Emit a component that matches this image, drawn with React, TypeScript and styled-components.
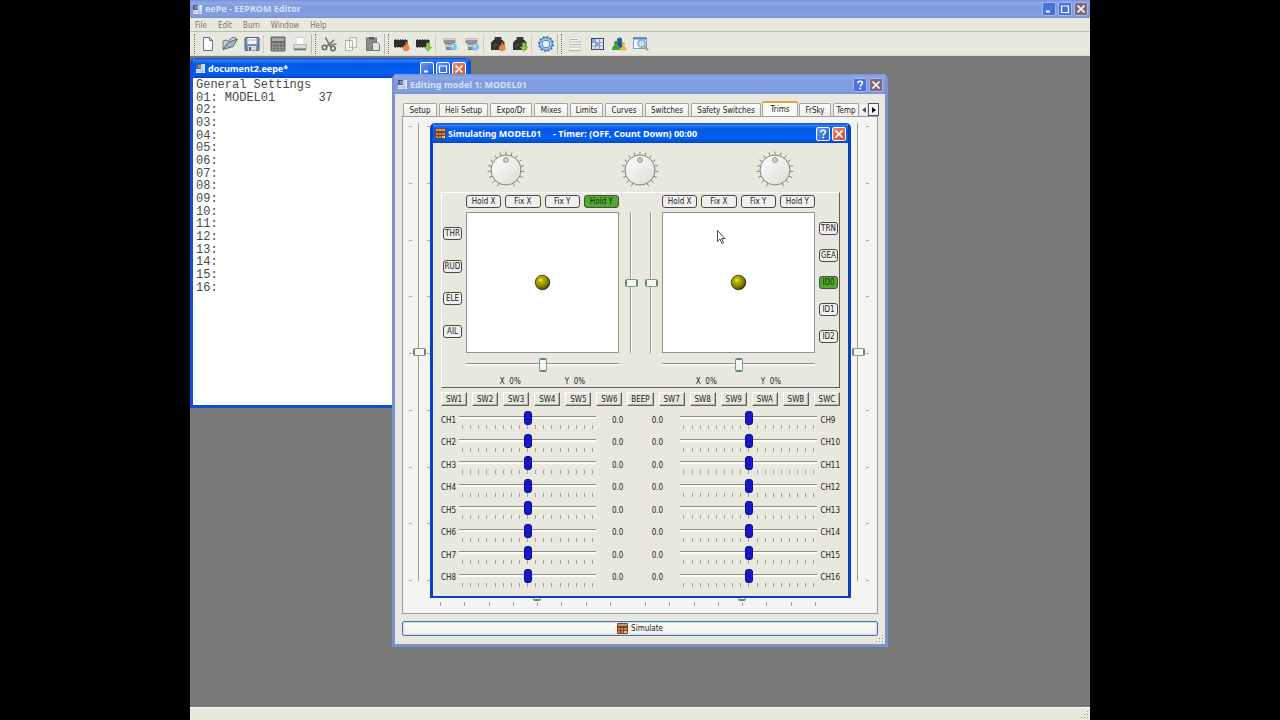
import React from 'react';
import styled, { createGlobalStyle, css } from 'styled-components';

const uiFont = '"DejaVu Sans Condensed", "DejaVu Sans", "Liberation Sans", sans-serif';
const titleFont = '"Noto Sans", "Open Sans", "Liberation Sans", sans-serif';
const face = '#e9e8df';

const GlobalStyle = createGlobalStyle`
  * { box-sizing: border-box; }
  body { margin: 0; background: #000; font-family: ${uiFont}; font-size: 8px; color: #222; }
  button, input { font: inherit; color: inherit; margin: 0; padding: 0; }
  svg { display: block; }
`;

/* ---------- main window ---------- */

const MainWindow = styled.main`
  display: flex;
  flex-direction: column;
  max-width: 900px;
  min-height: 100vh;
  margin: 0 auto;
  background: ${face};
`;

const TitleBar = styled.header<{ $active?: boolean; $tall?: boolean }>`
  display: flex;
  align-items: center;
  gap: 2px;
  flex: none;
  height: ${p => (p.$tall ? 20 : 18)}px;
  padding: ${p => (p.$tall ? 1 : 0)}px 2px 0;
  color: ${p => (p.$active ? '#fff' : '#d5e0fa')};
  font: bold 9px/18px ${titleFont};
  background: ${p =>
    p.$active
      ? 'linear-gradient(#0a4fd8, #2b7df8 12%, #0058e6 30%, #0560f4 75%, #0148cc)'
      : 'linear-gradient(#7a92dc, #8ca8e6 15%, #7e9bdc 40%, #839fe0 85%, #7790d6)'};
`;

const TitleIcon = styled.span`
  width: 11px;
  flex: none;
`;

const TitleText = styled.h1`
  flex: 1;
  margin: 0;
  font: inherit;
  white-space: pre;
  overflow: hidden;
`;

const CaptionButton = styled.button<{ $kind: 'blue' | 'red'; $dim?: boolean }>`
  display: grid;
  place-items: center;
  width: 14px;
  height: 14px;
  flex: none;
  border: 1px solid ${p => (p.$dim ? '#a3b5ee' : '#fff')};
  border-radius: 2px;
  color: #fff;
  background: ${p =>
    p.$kind === 'red'
      ? p.$dim ? '#80687a' : 'linear-gradient(135deg, #ea8f70, #d2492a)'
      : p.$dim ? '#4c70dc' : 'linear-gradient(135deg, #6a98f2, #1f57d8)'};
`;

const MenuBar = styled.nav`
  display: flex;
  flex: none;
  gap: 11px;
  height: 14px;
  padding: 0 5px;
  border-bottom: 1px solid #bdbbb2;
`;

const MenuItem = styled.button`
  border: 0;
  background: none;
  line-height: 15px;
  color: #77766f;
`;

const ToolBar = styled.div`
  display: flex;
  align-items: center;
  flex: none;
  height: 24px;
  border-bottom: 1px solid #d9d7ce;
`;

const Grip = styled.span<{ $line?: boolean }>`
  width: 7px;
  height: 20px;
  padding-left: 3px;
  border-left: 1px solid ${p => (p.$line ? '#b9b7af' : 'transparent')};
  &::before {
    content: '';
    display: block;
    height: 20px;
    border-left: 1px dotted #77756d;
  }
`;

const Separator = styled.span`
  width: 4px;
  height: 18px;
  border-left: 1px solid #cfcdc3;
`;

const ToolButton = styled.button`
  display: grid;
  place-items: center;
  width: 22px;
  height: 22px;
  border: 0;
  background: none;
`;

const Workspace = styled.section`
  position: relative;
  flex: 1;
  overflow: hidden;
  background: #787878;
`;

const StatusBar = styled.footer`
  display: flex;
  justify-content: flex-end;
  align-items: flex-end;
  flex: none;
  height: 13px;
  padding: 1px;
  border-top: 1px solid #fff;
`;

/* ---------- child windows ---------- */

const DocumentWindow = styled.section`
  position: absolute;
  left: 0;
  top: 2px;
  width: 281px;
  height: 350px;
  display: flex;
  flex-direction: column;
  border: 3px solid #0b4fd8;
  border-top: 0;
  border-radius: 5px 5px 0 0;
  overflow: hidden;
  background: #fff;
`;

const ModelList = styled.ul`
  list-style: none;
  margin: 0;
  padding: 1px 3px;
  font: 12px/13px "Liberation Mono", monospace;
  color: #4a4a4a;
  white-space: pre;
`;

const ModelRow = styled.li`
  height: 13px;
  &:nth-child(3n + 2) { height: 12px; }
`;

const EditWindow = styled.section`
  position: absolute;
  left: 202px;
  top: 18px;
  width: 496px;
  height: 573px;
  display: flex;
  flex-direction: column;
  border: 3px solid #7f8fd6;
  border-top-width: 0;
  border-radius: 5px 5px 0 0;
  overflow: hidden;
  background: ${face};
`;

const EditBody = styled.div`
  flex: 1;
  display: flex;
  flex-direction: column;
  padding: 7px 7px 8px;
`;

const TabStrip = styled.div`
  display: flex;
  align-items: flex-end;
  height: 15px;
  gap: 2px;
  padding-left: 1px;
`;

const Tab = styled.button<{ $w: number; $selected?: boolean }>`
  flex: none;
  width: ${p => p.$w}px;
  height: ${p => (p.$selected ? 15 : 13)}px;
  border: 1px solid #a4a4a0;
  border-bottom: 0;
  border-radius: 2px 2px 0 0;
  background: linear-gradient(#fdfdfb, #efede6);
  white-space: nowrap;
  ${p =>
    p.$selected &&
    css`
      margin: 0 -1px;
      border-top: 2px solid #e8a33c;
      background: #fafaf8;
    `}
`;

const TabScroller = styled.button<{ $focus?: boolean }>`
  display: grid;
  place-items: center;
  flex: none;
  width: ${p => (p.$focus ? 11 : 9)}px;
  height: 13px;
  margin-left: -2px;
  border: 1px solid ${p => (p.$focus ? '#3c5a80' : '#e4e2d8')};
  background: #f6f5f0;
`;

const TrimPane = styled.div`
  flex: 1;
  display: grid;
  grid-template-columns: 32px 1fr 1fr 32px;
  grid-template-rows: 1fr 25px;
  padding: 6px 0 3px;
  border: 1px solid #9b9d9c;
  background: #f4f4f2;
`;

const VerticalTrim = styled.div<{ $col: number }>`
  grid-column: ${p => p.$col};
  grid-row: 1;
  display: flex;
  gap: 1px;
  height: 458px;
  padding: 0 8px 0 6px;
  justify-content: ${p => (p.$col === 1 ? 'flex-start' : 'flex-end')};
`;

const VerticalTicks = styled.div`
  display: flex;
  flex-direction: column;
  justify-content: space-between;
  padding: 3px 0 0;
  i { width: 3px; height: 1px; background: #a9a9a6; }
`;

const BottomTrim = styled.div<{ $col: number }>`
  grid-column: ${p => p.$col};
  grid-row: 2;
  display: flex;
  flex-direction: column;
  gap: 1px;
  padding: 2px 26px 0 2px;
`;

const SimulateButton = styled.button`
  display: flex;
  align-items: center;
  justify-content: center;
  gap: 3px;
  height: 15px;
  margin-top: 7px;
  border: 1px solid #4f74a8;
  border-radius: 2px;
  box-shadow: inset 0 0 0 1px #cbdcf2;
  background: linear-gradient(#fcfcfa, #efeee8);
`;

const CornerGrip = styled.span`
  position: absolute;
  right: 1px;
  bottom: 1px;
`;

const SimWindow = styled.section`
  position: absolute;
  left: 240px;
  top: 67px;
  width: 421px;
  height: 475px;
  display: flex;
  flex-direction: column;
  border: 3px solid #0a41bd;
  border-width: 0 3px 2px;
  border-radius: 5px 5px 0 0;
  overflow: hidden;
  background: ${face};
`;

const SimBody = styled.div`
  padding: 0 8px;
`;

const DialRow = styled.div`
  display: grid;
  grid-template-columns: repeat(3, 1fr);
  justify-items: center;
  padding: 7px 0 2px;
  margin: 0 -2px;
`;

const StickFrame = styled.div`
  display: grid;
  grid-template-columns: 24px 1fr 21px 22px 1fr 24px;
  grid-template-rows: 13px 141px auto;
  row-gap: 4px;
  padding-top: 2px;
  height: 196px;
  border: 1px solid #fff;
  border-right-color: #5d5c57;
  border-bottom-color: #5d5c57;
`;

const ModeRow = styled.div<{ $col: number }>`
  grid-column: ${p => p.$col};
  grid-row: 1;
  display: grid;
  grid-template-columns: repeat(4, 1fr);
  gap: 4px;
`;

const Toggle = styled.button<{ $on?: boolean }>`
  height: 13px;
  border: 1px solid #4a4a4a;
  border-radius: 3px;
  line-height: 12px;
  text-align: center;
  white-space: nowrap;
  background: ${p => (p.$on ? '#4fab2c' : '#f0f0ee')};
`;

const SideSwitches = styled.div<{ $col: number; $pad: number }>`
  grid-column: ${p => p.$col};
  grid-row: 2;
  display: flex;
  flex-direction: column;
  align-items: ${p => (p.$col === 1 ? 'flex-start' : 'flex-end')};
  justify-content: space-between;
  padding: ${p => p.$pad}px 1px;
  ${Toggle} { width: 19px; }
`;

const StickPad = styled.div<{ $col: number }>`
  grid-column: ${p => p.$col};
  grid-row: 2;
  display: grid;
  place-items: center;
  border: 1px solid #8c969c;
  background: #fff;
`;

const TrimCell = styled.div<{ $col: number; $row: number }>`
  grid-column: ${p => p.$col};
  grid-row: ${p => p.$row};
  display: flex;
  flex-direction: column;
  align-items: ${p => (p.$col === 3 ? 'flex-end' : 'center')};
  padding: ${p => (p.$row === 3 ? '1px 0 0' : '0 2px')};
`;

const Readouts = styled.div`
  display: flex;
  justify-content: center;
  gap: 44px;
  width: 100%;
  padding: 5px 0 0;
  line-height: 10px;
  white-space: pre;
`;

const sliderThumb = css<{ $blue?: boolean; $vertical?: boolean }>`
  appearance: none;
  width: ${p => (p.$vertical ? 13 : 8)}px;
  height: ${p => (p.$vertical ? 8 : 14)}px;
  border-radius: ${p => (p.$blue ? 3 : 2)}px;
  ${p =>
    p.$blue
      ? css`
          border: 1px solid #0c0c96;
          background: #1717c4;
        `
      : css`
          border: 1px solid #84998a;
          ${p.$vertical ? 'border-left: 2px solid #5d9069; border-right: 2px solid #5d9069;' : 'border-top: 2px solid #5d9069; border-bottom: 2px solid #5d9069;'}
          background: #f6f6f4;
        `}
`;

const Slider = styled.input<{ $blue?: boolean; $vertical?: boolean }>`
  appearance: none;
  flex: none;
  display: block;
  ${p =>
    p.$vertical
      ? css`
          writing-mode: vertical-lr;
          width: 13px;
          height: 100%;
          background: linear-gradient(#9a9993, #9a9993) 5px 0 / 1px 100% no-repeat,
            linear-gradient(#fff, #fff) 6px 0 / 1px 100% no-repeat;
        `
      : css`
          width: 100%;
          height: 14px;
          background: linear-gradient(#8f8e88, #8f8e88) 0 5px / 100% 1px no-repeat,
            linear-gradient(#fbfbf8, #fbfbf8) 0 6px / 100% 2px no-repeat;
        `}
  &::-webkit-slider-thumb { ${sliderThumb} }
`;

const TickRow = styled.div`
  display: flex;
  justify-content: space-between;
  padding: 0 3px;
  i { width: 1px; height: 4px; background: #a3a29b; }
`;

const SwitchRow = styled.div`
  display: grid;
  grid-template-columns: repeat(13, 1fr);
  gap: 5px;
  margin: 4px 0 3px;
`;

const SwitchButton = styled.button`
  height: 14px;
  border: 1px solid #fff;
  border-right-color: #5f5e59;
  border-bottom-color: #5f5e59;
  box-shadow: inset -1px -1px #b9b7ad;
  background: ${face};
  line-height: 13px;
  text-align: center;
`;

const ChannelGrid = styled.div`
  display: grid;
  grid-template-columns: 1fr 1fr;
  grid-template-rows: repeat(8, 1fr);
  grid-auto-flow: column;
  height: 180px;
`;

const ChannelRow = styled.label<{ $right?: boolean }>`
  display: grid;
  align-items: center;
  grid-template-columns: ${p => (p.$right ? '41px 137px 1fr' : '18px 137px 1fr')};
`;

const ChannelName = styled.span<{ $right?: boolean }>`
  padding-left: ${p => (p.$right ? 3 : 0)}px;
`;

const ChannelSlider = styled.span`
  display: flex;
  flex-direction: column;
`;

const ChannelValue = styled.output<{ $right?: boolean }>`
  text-align: center;
  padding-right: ${p => (p.$right ? 5 : 0)}px;
`;

const Pointer = styled.span`
  position: absolute;
  left: 527px;
  top: 174px;
`;

/* ---------- drawings ---------- */

const AppIcon = () => (
  <svg width="11" height="11" viewBox="0 0 11 11">
    <rect x="1" y="1" width="9" height="9" fill="#dfe6f3" />
    <rect x="1" y="1" width="5" height="5" fill="#4c608c" />
    <rect x="3" y="2" width="3" height="3" fill="#7c94bd" />
    <path d="M1 8h9M7 1v9" stroke="#a9b5cf" strokeWidth="1" />
  </svg>
);

const SimIcon = () => (
  <svg width="11" height="11" viewBox="0 0 11 11">
    <rect width="11" height="11" rx="1" fill="#7a4526" />
    <rect x="1" y="1" width="9" height="2" fill="#b99a86" />
    <path d="M1 5h2v2H1zM4 5h2v2H4zM7 5h3v2H7zM1 8h2v2H1zM4 8h2v2H4z" fill="#cf8848" />
    <path d="M7 8h3v2H7z" fill="#f0c070" />
  </svg>
);

const Min = () => (
  <svg width="10" height="10" viewBox="0 0 10 10"><path d="M2 7.500h4" stroke="#fff" strokeWidth="2" /></svg>
);
const Max = () => (
  <svg width="10" height="10" viewBox="0 0 10 10"><path d="M1.500 2v6.500h7V2zM1 2h8" fill="none" stroke="#fff" strokeWidth="1.200" /></svg>
);
const Close = () => (
  <svg width="10" height="10" viewBox="0 0 10 10"><path d="M1.500 1.500l7 7M8.500 1.500l-7 7" stroke="#fff" strokeWidth="1.700" /></svg>
);
const Help = () => (
  <svg width="10" height="10" viewBox="0 0 10 10">
    <path d="M2.800 3.200C2.800.6 7.400.6 7.400 3c0 1.600-2.200 1.600-2.200 3.400" fill="none" stroke="#fff" strokeWidth="1.500" />
    <circle cx="5.200" cy="8.600" r="1" fill="#fff" />
  </svg>
);

const SizeGrip = () => (
  <svg width="9" height="9" viewBox="0 0 9 9">
    <path d="M7 1h1v1H7zM4 4h1v1H4zM7 4h1v1H7zM1 7h1v1H1zM4 7h1v1H4zM7 7h1v1H7z" fill="#96948a" />
  </svg>
);

const Ball = () => (
  <svg width="17" height="17" viewBox="0 0 17 17">
    <defs>
      <radialGradient id="ball" cx="38%" cy="34%" r="65%">
        <stop offset="0" stopColor="#f4f060" />
        <stop offset="0.25" stopColor="#b8b400" />
        <stop offset="0.75" stopColor="#7d7a00" />
        <stop offset="1" stopColor="#3e3d08" />
      </radialGradient>
    </defs>
    <circle cx="8.500" cy="8.500" r="7.300" fill="url(#ball)" stroke="#33330e" strokeWidth="0.800" />
  </svg>
);

const Dial = () => (
  <svg width="40" height="40" viewBox="0 0 40 40" role="img" aria-label="Potentiometer">
    <defs>
      <linearGradient id="dial" x1="0" y1="0" x2="1" y2="1">
        <stop offset="0" stopColor="#fff" />
        <stop offset="1" stopColor="#dddbd3" />
      </linearGradient>
    </defs>
    {Array.from({ length: 17 }, (_, i) => (
      <path key={i} d="M20 1.500v4" stroke="#77766f" strokeWidth="0.800" transform={`rotate(${-152 + i * 19} 20 20)`} />
    ))}
    <circle cx="20" cy="20" r="15" fill="url(#dial)" stroke="#84837d" strokeWidth="1" />
    <circle cx="20" cy="10" r="2.400" fill="#d5d4cd" stroke="#84837d" strokeWidth="0.900" />
  </svg>
);

const Flame = () => <path d="M12 6c.5 2 3.300 3.300 3.300 6.300A3.200 3.200 0 0 1 9 12.500c0-1.800 1-2.200 1.300-3.500l1 1.200C12 9 11.600 7.500 12 6z" fill="#f0823a" stroke="#e27230" strokeWidth=".5" />;
const DownArrow = () => <path d="M10.500 7h3v4h2.300L12 15.500 8.200 11h2.300z" fill="#84c84c" stroke="#6fb33e" strokeWidth=".6" />;
const Chip = () => (
  <>
    <path d="M1.500 3v9M4 3v9M6.500 3v9M9 3v9M11.500 3v9" stroke="#666" strokeWidth="1.200" />
    <rect x="0" y="4" width="13.500" height="7" fill="#2c2e2e" />
  </>
);
const Radio = () => (
  <>
    <path d="M5 4V1.500h6V4z" fill="#3a3d3c" stroke="#333" strokeWidth="1" />
    <path d="M1 6.500L3.500 4h9L14.500 6.500V14H1z" fill="#303433" />
    <path d="M3 8.500h4M3 10.500h3" stroke="#4d5553" />
  </>
);
const Stack = () => (
  <>
    <path d="M1.500 2.500h12v4h-12z" fill="#8d9093" />
    <path d="M2 3.500h11" stroke="#d3d5d7" strokeWidth="1.200" />
    <path d="M3 6.500h9v4H3z" fill="#aeb1b3" />
    <path d="M2 6.500c2 1.500 9 1.500 11 0M4.500 11h6v2.500h-6z" fill="#8d9093" stroke="#75787b" strokeWidth="1" />
    <path d="M3.500 9.500c2 1.200 6 1.200 8 0" fill="none" stroke="#e3e4e5" strokeWidth="1" />
    <circle cx="11.500" cy="11" r="3.400" fill="#7cc3ec" />
    <circle cx="10.600" cy="10" r="1.200" fill="#c9ebfb" />
  </>
);

const toolIcons: Record<string, React.ReactNode> = {
  New: <path d="M3.500 1.500h6l3 3v10h-9zM9.500 1.500v3h3" fill="#fbfcfe" stroke="#6a7585" />,
  Open: (
    <>
      <path d="M1 13V5l3-1 2 1 5-4 3 1-1 3" fill="#c8cdd2" stroke="#6f767c" />
      <path d="M1 13.500L6 6.500 15.500 3 11 10.500z" fill="#9fb1be" stroke="#5f6870" />
    </>
  ),
  Save: (
    <>
      <rect x="1" y="1.500" width="14" height="13" rx="1" fill="#7590b4" stroke="#4d5f7c" />
      <rect x="3.500" y="2" width="9" height="6" fill="#f4f6f8" />
      <path d="M4 4h8" stroke="#a9b2bf" />
      <rect x="4" y="10" width="8" height="4.500" fill="#d6dce2" />
      <rect x="5" y="11" width="2" height="3" fill="#4d5f7c" />
    </>
  ),
  Simulate: (
    <>
      <rect x=".5" y=".5" width="15" height="15" rx="1" fill="#6c6c6a" />
      <rect x="2" y="2" width="12" height="3" fill="#a9a9a6" />
      <path d="M2 8h12M2 11h12M2 13.500h12" stroke="#a6a6a3" strokeWidth="1.700" strokeDasharray="2.200 1" />
    </>
  ),
  Print: (
    <>
      <rect x="4" y="1.500" width="8" height="7" fill="#fff" stroke="#c9c9c4" strokeWidth=".8" />
      <path d="M1.500 8.500h13v4h-13z" fill="#dcdcd7" stroke="#b1b1ac" strokeWidth=".8" />
      <path d="M2 13.500h12" stroke="#6c6c68" strokeWidth="1.600" />
    </>
  ),
  Cut: (
    <>
      <path d="M4.500 1.500l5.500 10M13 4L5 11M15.500 8L6 9.500" stroke="#7d7d7a" strokeWidth="1.700" />
      <circle cx="3.500" cy="11.500" r="2.200" fill="none" stroke="#6b6b68" strokeWidth="1.600" />
      <circle cx="12" cy="12.500" r="2.200" fill="none" stroke="#6b6b68" strokeWidth="1.600" />
    </>
  ),
  Copy: <path d="M6.500 1.500h7v10h-7zM2.500 4.500h7v10h-7z" fill="#f6f6f3" stroke="#b1b1ad" />,
  Paste: (
    <>
      <rect x="1.500" y="2" width="10" height="12.500" fill="#8b8b88" stroke="#777774" />
      <rect x="4" y="1" width="5" height="2.500" fill="#5c5c5a" />
      <path d="M7.500 6.500h5l2 2v6h-7z" fill="#e4e4e1" stroke="#777" />
    </>
  ),
  'Burn to Tx': <><Chip /><Flame /></>,
  'Read from Tx': <><Chip /><DownArrow /></>,
  'Write backup': <Stack />,
  'Read backup': <Stack />,
  'Burn firmware': <><Radio /><Flame /></>,
  'Read firmware': <><Radio /><DownArrow /></>,
  Preferences: (
    <>
      <circle cx="8" cy="8" r="7" fill="none" stroke="#3577b0" strokeWidth="1.800" strokeDasharray="2.200 1.460" />
      <circle cx="8" cy="8" r="5" fill="none" stroke="#3f7fb8" strokeWidth="3.400" />
      <circle cx="8" cy="8" r="5" fill="none" stroke="#8cc6ee" strokeWidth="2" />
      <circle cx="8" cy="8" r="3" fill="#e9eeee" />
    </>
  ),
  Notes: (
    <>
      <path d="M2.500 1h9l2 2v12h-11z" fill="#f4f4f1" stroke="#d3d3cf" strokeWidth=".8" />
      <path d="M3 3.500h8M3 6h10M3 8.500h10M3 11h10M2 14.500h12" stroke="#b3b3b0" />
    </>
  ),
  Table: (
    <>
      <rect x="2.500" y="2.500" width="12" height="11" fill="#dfe6f3" stroke="#34456e" />
      <path d="M3 3h3.500v3.500H3zM7 7h3.500v3H7z" fill="#8fa6cf" />
      <path d="M6.500 3v10.500M10.500 3v10.500M3 6.500h11.500M3 10h11.500" stroke="#8b9fc6" />
    </>
  ),
  Contributors: (
    <>
      <circle cx="8.500" cy="4" r="2.600" fill="#2c5aa8" /><path d="M6 12V6h5.500v6z" fill="#2a5299" />
      <circle cx="5" cy="7" r="2" fill="#3f8d47" /><path d="M1 14c0-3 1.500-5.500 4-5.500S9.500 11 9.500 14z" fill="#3fa52c" />
      <circle cx="12.500" cy="8" r="1.800" fill="#f0b03a" /><path d="M9.500 14.500c0-6 6-6 6 0z" fill="#f0b03a" />
    </>
  ),
  Compare: (
    <>
      <rect x=".5" y="1.500" width="13" height="11" fill="#f3f7fb" stroke="#7d9cc4" />
      <path d="M.5 2.500h13" stroke="#5c86c0" strokeWidth="2" />
      <circle cx="8.500" cy="7.500" r="3.600" fill="#bfe6f5" stroke="#6c9bb5" strokeWidth="1.200" />
      <path d="M11.300 10.300l3.700 4" stroke="#b99a5c" strokeWidth="2" />
    </>
  ),
};

const toolbar = [
  'grip', 'New', 'Open', 'Save', 'sep', 'Simulate', 'Print',
  'grip', 'Cut', 'Copy', 'Paste',
  'grip', 'Burn to Tx', 'Read from Tx', 'sep', 'Write backup', 'Read backup', 'sep', 'Burn firmware', 'Read firmware', 'sep', 'Preferences',
  'grip', 'Notes', 'Table', 'Contributors', 'Compare',
];

const tabs: [string, number][] = [
  ['Setup', 34], ['Heli Setup', 49], ['Expo/Dr', 42], ['Mixes', 34], ['Limits', 33], ['Curves', 38],
  ['Switches', 44], ['Safety Switches', 70], ['Trims', 36], ['FrSky', 32], ['Temp', 26],
];

const modes = ['Hold X', 'Fix X', 'Fix Y', 'Hold Y'];
const switches = ['SW1', 'SW2', 'SW3', 'SW4', 'SW5', 'SW6', 'BEEP', 'SW7', 'SW8', 'SW9', 'SWA', 'SWB', 'SWC'];
const models = ['01: MODEL01      37', ...Array.from({ length: 15 }, (_, i) => `${String(i + 2).padStart(2, '0')}:`)];

const ticks = (n: number) => Array.from({ length: n }, (_, i) => <i key={i} />);

const Channel = ({ n }: { n: number }) => {
  const right = n > 8;
  const name = <ChannelName $right={right}>CH{n}</ChannelName>;
  const value = <ChannelValue $right={right}>0.0</ChannelValue>;
  return (
    <ChannelRow $right={right}>
      {right ? value : name}
      <ChannelSlider>
        <Slider type="range" $blue min={-100} max={100} defaultValue={0} aria-label={`CH${n}`} />
        <TickRow>{ticks(17)}</TickRow>
      </ChannelSlider>
      {right ? name : value}
    </ChannelRow>
  );
};

const Stick = ({ col, held, side }: { col: number; held?: string; side: string }) => (
  <>
    <ModeRow $col={col}>
      {modes.map(m => (
        <Toggle key={m} $on={m === held} aria-pressed={m === held}>{m}</Toggle>
      ))}
    </ModeRow>
    <StickPad $col={col}><Ball /></StickPad>
    <TrimCell $col={col} $row={3}>
      <Slider type="range" aria-label={`${side} horizontal trim`} defaultValue={50} />
      <Readouts>
        <span>X  0%</span>
        <span>Y  0%</span>
      </Readouts>
    </TrimCell>
  </>
);

const SideVerticalTrim = ({ label, col }: { label: string; col: number }) => (
  <VerticalTrim $col={col}>
    {col === 1 && <VerticalTicks>{ticks(9)}</VerticalTicks>}
    <Slider type="range" $vertical aria-label={label} defaultValue={50} />
    <VerticalTicks>{ticks(9)}</VerticalTicks>
  </VerticalTrim>
);

export default function App() {
  return (
    <>
      <GlobalStyle />
      <MainWindow>
        <TitleBar>
          <TitleIcon><AppIcon /></TitleIcon>
          <TitleText>eePe - EEPROM Editor</TitleText>
          <CaptionButton $kind="blue" $dim aria-label="Minimize"><Min /></CaptionButton>
          <CaptionButton $kind="blue" $dim aria-label="Maximize"><Max /></CaptionButton>
          <CaptionButton $kind="red" $dim aria-label="Close"><Close /></CaptionButton>
        </TitleBar>
        <MenuBar>
          {['File', 'Edit', 'Burn', 'Window', 'Help'].map(m => <MenuItem key={m}>{m}</MenuItem>)}
        </MenuBar>
        <ToolBar>
          {toolbar.map((t, i) =>
            t === 'grip' ? <Grip key={i} $line={i > 0} />
              : t === 'sep' ? <Separator key={i} />
                : (
                  <ToolButton key={i} aria-label={t}>
                    <svg width="16" height="16" viewBox="0 0 16 16">{toolIcons[t]}</svg>
                  </ToolButton>
                ),
          )}
        </ToolBar>

        <Workspace>
          <DocumentWindow>
            <TitleBar $active $tall>
              <TitleIcon><AppIcon /></TitleIcon>
              <TitleText>document2.eepe*</TitleText>
              <CaptionButton $kind="blue" aria-label="Minimize"><Min /></CaptionButton>
              <CaptionButton $kind="blue" aria-label="Maximize"><Max /></CaptionButton>
              <CaptionButton $kind="red" aria-label="Close"><Close /></CaptionButton>
            </TitleBar>
            <ModelList>
              <ModelRow>General Settings</ModelRow>
              {models.map(m => <ModelRow key={m}>{m}</ModelRow>)}
            </ModelList>
          </DocumentWindow>

          <EditWindow>
            <TitleBar $tall>
              <TitleIcon><AppIcon /></TitleIcon>
              <TitleText>Editing model 1: MODEL01</TitleText>
              <CaptionButton $kind="blue" $dim aria-label="Help"><Help /></CaptionButton>
              <CaptionButton $kind="red" $dim aria-label="Close"><Close /></CaptionButton>
            </TitleBar>
            <EditBody>
              <TabStrip role="tablist">
                {tabs.map(([t, w]) => (
                  <Tab key={t} role="tab" $w={w} $selected={t === 'Trims'} aria-selected={t === 'Trims'}>{t}</Tab>
                ))}
                <TabScroller aria-label="Scroll tabs left">
                  <svg width="4" height="6" viewBox="0 0 4 6"><path d="M4 0v6L0 3z" fill="#555" /></svg>
                </TabScroller>
                <TabScroller $focus aria-label="Scroll tabs right">
                  <svg width="4" height="6" viewBox="0 0 4 6"><path d="M0 0v6l4-3z" fill="#000" /></svg>
                </TabScroller>
              </TabStrip>
              <TrimPane>
                <SideVerticalTrim label="Left vertical trim" col={1} />
                <SideVerticalTrim label="Right vertical trim" col={4} />
                <BottomTrim $col={2}>
                  <Slider type="range" aria-label="Left horizontal trim" defaultValue={57} />
                  <TickRow>{ticks(8)}</TickRow>
                </BottomTrim>
                <BottomTrim $col={3}>
                  <Slider type="range" aria-label="Right horizontal trim" defaultValue={57} />
                  <TickRow>{ticks(8)}</TickRow>
                </BottomTrim>
              </TrimPane>
              <SimulateButton><SimIcon />Simulate</SimulateButton>
            </EditBody>
            <CornerGrip><SizeGrip /></CornerGrip>
          </EditWindow>

          <SimWindow>
            <TitleBar $active $tall>
              <TitleIcon><SimIcon /></TitleIcon>
              <TitleText>Simulating MODEL01     - Timer: (OFF, Count Down) 00:00</TitleText>
              <CaptionButton $kind="blue" aria-label="Help"><Help /></CaptionButton>
              <CaptionButton $kind="red" aria-label="Close"><Close /></CaptionButton>
            </TitleBar>
            <SimBody>
              <DialRow><Dial /><Dial /><Dial /></DialRow>
              <StickFrame>
                <SideSwitches $col={1} $pad={15}>
                  {['THR', 'RUD', 'ELE', 'AIL'].map(s => <Toggle key={s}>{s}</Toggle>)}
                </SideSwitches>
                <Stick col={2} held="Hold Y" side="Left" />
                <TrimCell $col={3} $row={2}>
                  <Slider type="range" $vertical aria-label="Left vertical trim" defaultValue={50} />
                </TrimCell>
                <TrimCell $col={4} $row={2}>
                  <Slider type="range" $vertical aria-label="Right vertical trim" defaultValue={50} />
                </TrimCell>
                <Stick col={5} side="Right" />
                <SideSwitches $col={6} $pad={10}>
                  {['TRN', 'GEA', 'ID0', 'ID1', 'ID2'].map(s => (
                    <Toggle key={s} $on={s === 'ID0'} aria-pressed={s === 'ID0'}>{s}</Toggle>
                  ))}
                </SideSwitches>
              </StickFrame>
              <SwitchRow>
                {switches.map(s => <SwitchButton key={s}>{s}</SwitchButton>)}
              </SwitchRow>
              <ChannelGrid>
                {Array.from({ length: 16 }, (_, i) => <Channel key={i} n={i + 1} />)}
              </ChannelGrid>
            </SimBody>
          </SimWindow>

          <Pointer>
            <svg width="9" height="15" viewBox="0 0 9 15">
              <path d="M.5.500v11l2.500-2.500 1.800 4.500 1.700-.700-1.800-4.300h3.300z" fill="#fff" stroke="#222" strokeWidth=".8" />
            </svg>
          </Pointer>
        </Workspace>
        <StatusBar><SizeGrip /></StatusBar>
      </MainWindow>
    </>
  );
}
